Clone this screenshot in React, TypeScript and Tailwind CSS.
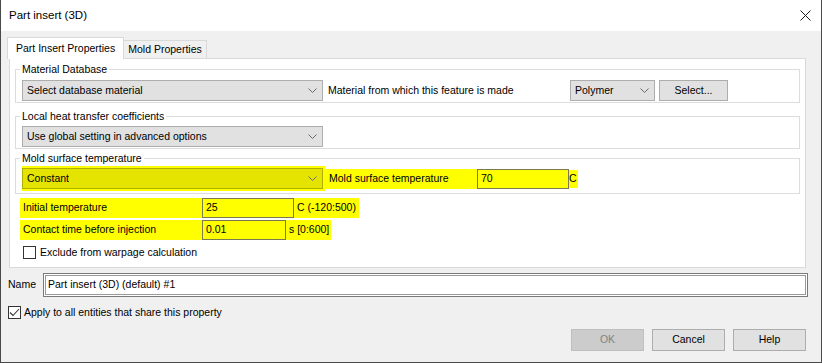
import React from 'react';

const font = "font-['Liberation_Sans',Arial,sans-serif]";

function Chevron() {
  return (
    <svg width="9" height="5" viewBox="0 0 9 5" className="shrink-0">
      <polyline points="0.5,0.5 4.5,4.5 8.5,0.5" fill="none" stroke="#6b6b6b" strokeWidth="1" />
    </svg>
  );
}

function Combo({ text, width, yellow }: { text: string; width: string; yellow?: boolean }) {
  return (
    <div
      className={`${width} h-[21px] flex items-center justify-between pl-[4px] pr-[5px] border ${
        yellow ? 'bg-[#e4e400] border-[#b0b000]' : 'bg-[#e1e1e1] border-[#adadad]'
      }`}
    >
      <span className="truncate">{text}</span>
      <Chevron />
    </div>
  );
}

function Group({ title, children, className = '' }: { title: string; children: React.ReactNode; className?: string }) {
  return (
    <fieldset className={`border border-[#dcdcdc] pl-[6px] pr-[6px] ${className}`}>
      <legend className="-ml-[2px] px-[2px] leading-[13px]">{title}</legend>
      {children}
    </fieldset>
  );
}

function Input({ value, width, yellow }: { value: string; width: string; yellow?: boolean }) {
  return (
    <div
      className={`${width} h-[20px] flex items-center pl-[3px] border ${
        yellow ? 'bg-[#ffff00] border-[#7a7a50]' : 'bg-white border-[#7a7a7a]'
      }`}
    >
      {value}
    </div>
  );
}

function Checkbox({ checked }: { checked?: boolean }) {
  return (
    <div className="w-[13px] h-[13px] border border-[#333333] bg-white flex items-center justify-center shrink-0">
      {checked && (
        <svg width="11" height="11" viewBox="0 0 11 11">
          <polyline points="1,5.5 4,8.5 10,2" fill="none" stroke="#333333" strokeWidth="1.1" />
        </svg>
      )}
    </div>
  );
}

function Button({ label, disabled }: { label: string; disabled?: boolean }) {
  return (
    <div
      className={`w-[73px] h-[22px] flex items-center justify-center border ${
        disabled ? 'bg-[#cccccc] border-[#bfbfbf] text-[#838383]' : 'bg-[#e1e1e1] border-[#adadad]'
      }`}
    >
      {label}
    </div>
  );
}

export default function App() {
  return (
    <div className={`${font} w-[822px] h-[363px] flex flex-col border-l border-r border-b border-[#4a4a4a] text-[10.5px] text-black overflow-hidden`}>
      {/* Title bar */}
      <div className="h-[31px] bg-white flex items-center justify-between pl-[8px] pr-[10px] shrink-0">
        <span className="text-[11.5px]">Part insert (3D)</span>
        <svg width="11" height="11" viewBox="0 0 11 11">
          <path d="M0.5 0.5 L10.5 10.5 M10.5 0.5 L0.5 10.5" stroke="#1a1a1a" strokeWidth="1" />
        </svg>
      </div>

      <div className="flex-1 bg-[#f0f0f0] flex flex-col">
        {/* Tabs */}
        <div className="flex items-end pl-[6px] pt-[6px]">
          <div className="h-[22px] px-[8px] pt-[3px] bg-white border border-b-0 border-[#d9d9d9] relative z-10 -mb-[1px]">
            Part Insert Properties
          </div>
          <div className="h-[18px] px-[4px] pt-[1px] bg-[#f0f0f0] border border-b-0 border-l-0 border-[#d9d9d9]">
            Mold Properties
          </div>
        </div>

        {/* Tab panel */}
        <div className="ml-[8px] w-[797px] h-[210px] bg-white border border-[#d9d9d9] px-[5px] pt-[4px] flex flex-col">
          <Group title="Material Database" className="pt-[4px] pb-[1px]">
            <div className="flex items-center">
              <Combo text="Select database material" width="w-[301px]" />
              <span className="ml-[5px] w-[242px]">Material from which this feature is made</span>
              <Combo text="Polymer" width="w-[85px]" />
              <div className="ml-[4px] w-[69px] h-[21px] flex items-center justify-center bg-[#e1e1e1] border border-[#adadad]">
                Select...
              </div>
            </div>
          </Group>

          <Group title="Local heat transfer coefficients" className="mt-[7px] pt-[3px] pb-[1px]">
            <Combo text="Use global setting in advanced options" width="w-[301px]" />
          </Group>

          <Group title="Mold surface temperature" className="mt-[3px] pt-[3px] pb-[4px]">
            <div className="flex items-center">
              <div className="bg-[#ffff00] py-[2px] -my-[2px] pr-[2px]">
                <Combo text="Constant" width="w-[301px]" yellow />
              </div>
              <span className="h-[20px] w-[152px] flex items-center pl-[4px] bg-[#ffff00]">Mold surface temperature</span>
              <Input value="70" width="w-[92px]" yellow />
              <span className="h-[18px] flex items-center bg-[#ffff00] pr-[1px]">C</span>
            </div>
          </Group>

          <div className="mt-[4px] ml-[5px] flex items-center w-fit bg-[#ffff00] pl-[3px] pr-[3px]">
            <span className="w-[179px]">Initial temperature</span>
            <Input value="25" width="w-[92px]" yellow />
            <span className="ml-[3px]">C (-120:500)</span>
          </div>
          <div className="mt-[2px] ml-[5px] flex items-center w-fit bg-[#ffff00] pl-[3px] pr-[2px]">
            <span className="w-[179px]">Contact time before injection</span>
            <Input value="0.01" width="w-[84px]" yellow />
            <span className="ml-[3px]">s [0:600]</span>
          </div>

          <div className="mt-[5px] ml-[8px] flex items-center gap-[4px]">
            <Checkbox />
            <span>Exclude from warpage calculation</span>
          </div>
        </div>

        {/* Name */}
        <div className="mt-[5px] flex items-center pl-[7px]">
          <span className="w-[35px]">Name</span>
          <div className="w-[765px] h-[24px] flex items-center pl-[4px] bg-white border border-[#7a7a7a] shadow-[inset_0_0_0_1px_#ffffff,inset_0_0_0_2px_#9a9a9a]">
            Part insert (3D) (default) #1
          </div>
        </div>

        <div className="mt-[8px] pl-[7px] flex items-center gap-[3px]">
          <Checkbox checked />
          <span>Apply to all entities that share this property</span>
        </div>

        <div className="mt-[8px] flex justify-end gap-[8px] pr-[15px]">
          <Button label="OK" disabled />
          <Button label="Cancel" />
          <Button label="Help" />
        </div>
      </div>
    </div>
  );
}
